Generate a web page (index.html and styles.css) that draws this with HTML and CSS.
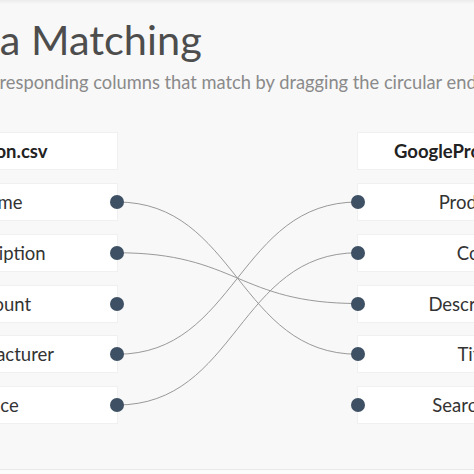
FILE: index.html
```html
<!DOCTYPE html>
<html lang="en">
<head>
  <meta charset="UTF-8">
  <title>Data Matching</title>
  <link rel="stylesheet" href="styles.css">
</head>
<body>

<div class="nav-shadow"></div>

<div class="page">
  <div class="content">
    <header>
      <h1>Data Matching</h1>
      <p>Select corresponding columns that match by dragging the circular endpoints.</p>
    </header>

    <div class="matcher">
      <div class="column left">
        <div class="cell head">Amazon.csv</div>
        <div class="cell">Name<span class="dot"></span></div>
        <div class="cell">Description<span class="dot"></span></div>
        <div class="cell">Amount<span class="dot"></span></div>
        <div class="cell">Manufacturer<span class="dot"></span></div>
        <div class="cell">Price<span class="dot"></span></div>
      </div>

      <div class="column right">
        <div class="cell head">GoogleProducts.csv</div>
        <div class="cell"><span class="dot"></span>Producer</div>
        <div class="cell"><span class="dot"></span>Cost</div>
        <div class="cell"><span class="dot"></span>Description</div>
        <div class="cell"><span class="dot"></span>Title</div>
        <div class="cell"><span class="dot"></span>Search Tag</div>
      </div>

      <!-- links between matched columns -->
      <svg class="links" width="713" height="300" viewBox="0 0 713 300">
        <path d="M236 69 C356 69 357 221.25 477 221.25" />
        <path d="M236 119.75 C356 119.75 357 170.5 477 170.5" />
        <path d="M236 221.25 C356 221.25 357 69 477 69" />
        <path d="M236 272 C356 272 357 119.75 477 119.75" />
      </svg>
    </div>
  </div>
</div>

<footer></footer>

</body>
</html>
```

FILE: styles.css
```css
body {
  margin: 0;
  font-family: Lato, 'Liberation Sans', sans-serif;
  background-color: #f8f8f8;
  overflow: hidden;
}

.nav-shadow {
  height: 4px;
  background: linear-gradient(#ebebeb, #f8f8f8);
}

.page {
  display: flex;
  justify-content: center;
}

.content {
  width: 713px;
  flex-shrink: 0;
}

header {
  padding-left: 40px;
}

header h1 {
  margin: 11px 0 0;
  padding-left: 13px;
  font-size: 41.5px;
  line-height: 48px;
  font-weight: 400;
  color: #4d4d4d;
}

header p {
  margin: 8.7px 0 0;
  font-size: 18.3px;
  line-height: 21.6px;
  color: #8a8a8a;
}

.matcher {
  position: relative;
  display: flex;
  justify-content: space-between;
  margin-top: 40px;
}

.column {
  width: 236px;
  display: flex;
  flex-direction: column;
  gap: 14.75px;
}

.cell {
  position: relative;
  height: 36px;
  line-height: 36px;
  text-align: center;
  font-size: 18.5px;
  color: #333;
  background-color: white;
  box-shadow: 0 0 0 1px #f0f0f0;
}

.cell.head {
  font-weight: bold;
  color: #222;
}

.dot {
  position: absolute;
  top: 11px;
  width: 14px;
  height: 14px;
  border-radius: 50%;
  background-color: #3e5064;
  z-index: 2;
}

.left .dot {
  right: -7px;
}

.right .dot {
  left: -7px;
}

.links {
  position: absolute;
  left: 0;
  top: 0;
  pointer-events: none;
}

.links path {
  fill: none;
  stroke: #999;
  stroke-width: 1;
}

footer {
  margin-top: 46px;
  height: 20px;
  border-top: 1px solid #e8e8e8;
  background-color: #fcfcfc;
}
```
